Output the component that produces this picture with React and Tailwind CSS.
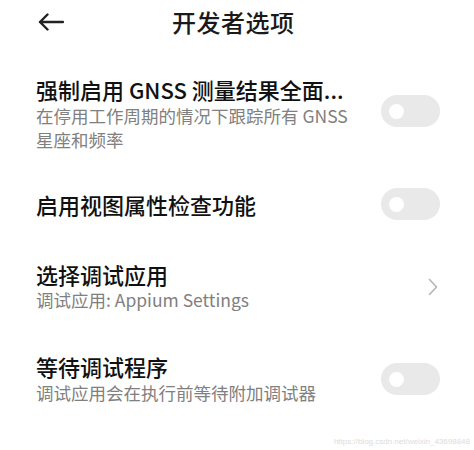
import React from "react";

function Toggle({ className = "" }) {
  return (
    <div className={`w-[59px] h-[32px] rounded-full bg-[#e9e9e9] flex items-center shrink-0 ${className}`}>
      <div className="w-[15px] h-[15px] rounded-full bg-white ml-[8px]" />
    </div>
  );
}

export default function App() {
  return (
    <div className="w-[474px] h-[450px] bg-white overflow-hidden relative font-['Noto_Sans_CJK_SC','Noto_Sans',sans-serif]">
      {/* Header */}
      <div className="h-[44px] flex items-center pl-[38px]">
        <svg width="26" height="18" viewBox="0 0 26 18" className="shrink-0">
          <path d="M25 9H2M9.5 1.5L2 9l7.5 7.5" fill="none" stroke="#222" strokeWidth="2.4" strokeLinecap="round" strokeLinejoin="round" />
        </svg>
        <div className="ml-[108px] text-[24px] leading-[30px] font-medium text-[#1a1a1a] tracking-[0.5px]">开发者选项</div>
      </div>

      {/* Item 1 */}
      <div className="mt-[32px] flex items-start pl-[36px] pr-[34px]">
        <div className="flex-1 min-w-0">
          <div className="text-[22px] leading-[26px] font-medium text-[#111] whitespace-nowrap">强制启用 GNSS 测量结果全面...</div>
          <div className="text-[17.5px] leading-[24px] text-[#808080] mt-[2px] whitespace-nowrap">
            在停用工作周期的情况下跟踪所有 GNSS
            <br />
            星座和频率
          </div>
        </div>
        <Toggle className="mt-[19px]" />
      </div>

      {/* Item 2 */}
      <div className="mt-[36px] flex items-center pl-[36px] pr-[34px]">
        <div className="flex-1 text-[22px] leading-[26px] font-medium text-[#111]">启用视图属性检查功能</div>
        <Toggle />
      </div>

      {/* Item 3 */}
      <div className="mt-[41px] flex items-center pl-[36px] pr-[36px]">
        <div className="flex-1">
          <div className="text-[22px] leading-[26px] font-medium text-[#111]">选择调试应用</div>
          <div className="text-[17.5px] leading-[24px] text-[#808080] mt-[1px]">调试应用: Appium Settings</div>
        </div>
        <svg width="10" height="18" viewBox="0 0 10 18" className="shrink-0 mt-[1px]">
          <path d="M1.5 1.5L8.5 9l-7 7.5" fill="none" stroke="#b5b5b5" strokeWidth="1.6" strokeLinecap="round" strokeLinejoin="round" />
        </svg>
      </div>

      {/* Item 4 */}
      <div className="mt-[41px] flex items-center pl-[36px] pr-[34px]">
        <div className="flex-1">
          <div className="text-[22px] leading-[26px] font-medium text-[#111]">等待调试程序</div>
          <div className="text-[17.5px] leading-[24px] text-[#808080] mt-[2px]">调试应用会在执行前等待附加调试器</div>
        </div>
        <Toggle />
      </div>

      <div className="absolute right-[4px] bottom-[3px] text-[8px] leading-[10px] text-[#dcdcdc] font-['Liberation_Sans',sans-serif]">
        https://blog.csdn.net/weixin_43698848
      </div>
    </div>
  );
}
